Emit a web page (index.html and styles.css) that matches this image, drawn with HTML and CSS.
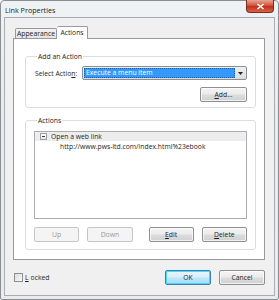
FILE: index.html
```html
<!DOCTYPE html>
<html>
<head>
<meta charset="utf-8">
<link rel="stylesheet" href="styles.css">
</head>
<body>
<div class="window">
  <div class="titlebar">
    <span class="title">Link Properties</span>
    <span class="close"><svg width="9" height="7" viewBox="0 0 9 7"><path d="M1.5 1 L7.5 6 M7.5 1 L1.5 6" stroke="#fff" stroke-width="1.6"/></svg></span>
  </div>
  <div class="client">
    <div class="tabs">
      <div class="tab tab-appearance">Appearance</div>
      <div class="tab tab-actions active">Actions</div>
    </div>
    <div class="panel">
      <fieldset class="group group-add">
        <legend>Add an Action</legend>
        <div class="select-row">
          <span class="label">Select Actio<u>n</u>:</span>
          <div class="select">
            <span class="select-value">Execute a menu item</span>
            <span class="select-arrow"><svg width="5" height="3" viewBox="0 0 5 3"><path d="M0 0 H5 L2.5 3 Z" fill="#222"/></svg></span>
          </div>
        </div>
        <div class="btn-row right">
          <button class="btn"><u>A</u>dd...</button>
        </div>
      </fieldset>
      <fieldset class="group group-actions">
        <legend>Actions</legend>
        <div class="list">
          <div class="row selected"><span class="expander"></span>Open a web link</div>
          <div class="row child">http://www.pws-ltd.com/index.html%23ebook</div>
        </div>
        <div class="btn-row spread">
          <button class="btn disabled">Up</button>
          <button class="btn disabled">Down</button>
          <span class="spacer"></span>
          <button class="btn"><u>E</u>dit</button>
          <button class="btn"><u>D</u>elete</button>
        </div>
      </fieldset>
    </div>
    <div class="footer">
      <label class="check"><span class="box"></span><u>L</u>ocked</label>
      <span class="spacer"></span>
      <button class="btn default">OK</button>
      <button class="btn">Cancel</button>
    </div>
  </div>
</div>
</body>
</html>
```
FILE: styles.css
```css
* { box-sizing: border-box; }
html, body { margin: 0; padding: 0; background: #ffffff; }
body {
  font-family: "Open Sans", "Noto Sans", sans-serif;
  font-size: 6.8px;
  color: #1e1e1e;
}
.window {
  width: 279px;
  height: 300px;
  border: 1px solid #8a8d91;
  border-radius: 4px 4px 2px 2px;
  background: linear-gradient(#eef2f5, #e6ebef 40%, #e9ecef);
  padding: 0 3px 3px 3px;
  display: flex;
  flex-direction: column;
}
.titlebar {
  height: 16px;
  flex: none;
  display: flex;
  align-items: flex-start;
  position: relative;
}
.title {
  padding: 4px 0 0 1px;
  font-size: 7.2px;
  color: #1b1b1b;
}
.close {
  position: absolute;
  right: 1px;
  top: -1px;
  width: 28px;
  height: 13px;
  border: 1px solid #7d2b21;
  border-top: none;
  border-radius: 0 0 4px 4px;
  background: linear-gradient(#e8a594, #d2543c 45%, #c2311c 55%, #d8634a);
  display: flex;
  align-items: center;
  justify-content: center;
}
.client {
  flex: 1;
  border: 1px solid #a9adb2;
  background: #f0f0f0;
  display: flex;
  flex-direction: column;
  padding: 8px 9px 0 8px;
}
.tabs {
  display: flex;
  align-items: flex-end;
  height: 12px;
  flex: none;
  padding-left: 2px;
  position: relative;
  z-index: 1;
}
.tab {
  height: 10px;
  border: 1px solid #969aa0;
  border-bottom: none;
  border-radius: 2px 2px 0 0;
  background: linear-gradient(#f3f3f3, #e3e3e3);
  line-height: 9px;
  text-align: center;
}
.tab-appearance { width: 42px; }
.tab-actions { width: 31px; }
.tab.active {
  height: 13px;
  margin-bottom: -1px;
  background: #ffffff;
  border-left: none;
  line-height: 11px;
}
.panel {
  height: 222px;
  flex: none;
  border: 1px solid #969aa0;
  background: #ffffff;
  padding: 13px 8px 0 11px;
  display: flex;
  flex-direction: column;
}
.group {
  margin: 0;
  border: 1px solid #d5dfe5;
  border-radius: 3px;
  padding: 0 8px 0 8px;
  min-width: 0;
}
.group legend {
  padding: 0 1px;
  margin-left: 3px;
  line-height: 9px;
}
.group-add { height: 56px; flex: none; }
.group-actions { height: 134px; flex: none; margin-top: 8px; }
.select-row {
  display: flex;
  align-items: center;
  margin-top: 5px;
  height: 14px;
}
.label { width: 48px; padding-left: 1px; }
.select {
  flex: 1;
  height: 14px;
  border: 1px solid #8b9096;
  border-radius: 2px;
  background: linear-gradient(#f0f0f0, #dcdcdc);
  display: flex;
  padding: 1px;
}
.select-value {
  flex: 1;
  background: #3399ff;
  color: #ffffff;
  line-height: 10px;
  padding-left: 2px;
  outline: 1px dotted #1a5fa8;
  outline-offset: -1px;
}
.select-arrow {
  width: 10px;
  display: flex;
  align-items: center;
  justify-content: center;
}
.btn-row { display: flex; }
.btn-row.right { justify-content: flex-end; margin-top: 7px; }
.btn-row.spread { margin-top: 8px; gap: 8px; }
.spacer { flex: 1; }
.btn {
  font: inherit;
  color: #1e1e1e;
  width: 47px;
  height: 15px;
  padding: 0;
  border: 1px solid #8e8f8f;
  border-radius: 2px;
  background: linear-gradient(#f4f4f4, #ececec 45%, #dcdcdc 55%, #d0d0d0);
  box-shadow: inset 0 0 0 1px rgba(255,255,255,0.7);
  line-height: 12px;
}
.btn u, .label u, .check u { text-decoration: underline; }
.btn.disabled {
  color: #9a9a9a;
  border-color: #c4c6c8;
  background: #f4f4f4;
  box-shadow: none;
}
.btn.default {
  border-color: #3c7fb1;
  background: linear-gradient(#eaf6fd, #d9f0fc 45%, #bee6fd 55%, #a7d9f5);
  box-shadow: inset 0 0 0 1px #48d6fd;
}
.list {
  height: 88px;
  margin-top: 6px;
  border: 1px solid #abadb3;
  background: #ffffff;
  padding: 0;
}
.row {
  height: 9px;
  line-height: 9px;
  display: flex;
  align-items: center;
  white-space: nowrap;
}
.row.selected {
  background: #ededed;
  padding-left: 5px;
}
.row.child { padding-left: 25px; margin-top: 1px; }
.expander {
  width: 7px;
  height: 7px;
  border: 1px solid #a0a0a0;
  background: linear-gradient(#ffffff, #e4e4e4);
  margin-right: 4px;
  position: relative;
}
.expander::after {
  content: "";
  position: absolute;
  left: 1px;
  top: 2px;
  width: 3px;
  height: 1px;
  background: #404040;
}
.footer {
  display: flex;
  align-items: center;
  margin-top: 10px;
  padding-left: 1px;
  gap: 8px;
}
.footer .btn { width: 46px; }
.check {
  display: flex;
  align-items: center;
  gap: 2px;
}
.box {
  width: 9px;
  height: 9px;
  border: 1px solid #8f8f8f;
  background: linear-gradient(135deg, #dcdcdc, #f8f8f8);
}
```
